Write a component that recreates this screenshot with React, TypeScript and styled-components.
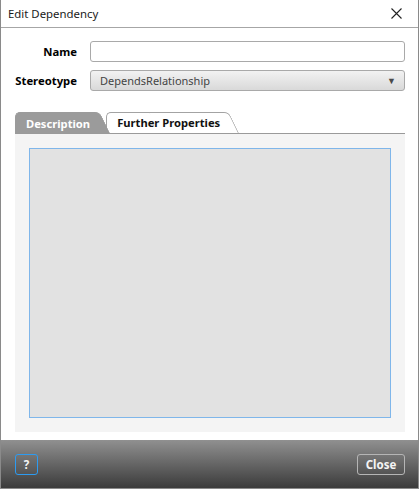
import React from "react";
import styled, { createGlobalStyle } from "styled-components";

const GlobalStyle = createGlobalStyle`
  html, body {
    margin: 0;
    padding: 0;
    background: #ffffff;
  }
  body {
    font-family: "Noto Sans", "Open Sans", sans-serif;
    font-size: 11px;
    color: #000;
  }
`;

const Window = styled.div`
  box-sizing: border-box;
  width: 419px;
  height: 489px;
  display: flex;
  flex-direction: column;
  background: #ffffff;
  border: 1px solid #8a8a8a;
  border-top: none;
`;

const TitleBar = styled.div`
  height: 28px;
  box-sizing: border-box;
  display: flex;
  align-items: center;
  justify-content: space-between;
  padding: 0 16px 0 7px;
  border-bottom: 1px solid #a6a6a6;
`;

const Title = styled.span`
  font-size: 11.4px;
  color: #1a1a1a;
`;

const CloseIcon = styled.button`
  border: none;
  background: none;
  padding: 0;
  width: 11px;
  height: 11px;
  display: flex;
  cursor: pointer;
`;

const Body = styled.div`
  flex: 1;
  display: flex;
  flex-direction: column;
  padding: 13px 13px 8px 14px;
`;

const Form = styled.div`
  display: grid;
  grid-template-columns: 62px 1fr;
  column-gap: 13px;
  row-gap: 8px;
  align-items: center;
`;

const Label = styled.label`
  text-align: right;
  font-weight: bold;
  font-size: 11.3px;
`;

const TextInput = styled.input`
  box-sizing: border-box;
  height: 21px;
  width: 100%;
  border: 1px solid #a9a9a9;
  border-radius: 3px;
  background: #fff;
  outline: none;
`;

const Select = styled.div`
  box-sizing: border-box;
  height: 21px;
  display: flex;
  align-items: center;
  justify-content: space-between;
  padding: 0 8px 0 9px;
  border: 1px solid #a9a9a9;
  border-radius: 3px;
  background: linear-gradient(#f2f2f2, #d9d9d9);
  color: #444;
  font-size: 11px;
`;

const Arrow = styled.span`
  font-size: 9px;
  color: #4a4a4a;
`;

const TabStrip = styled.div`
  margin-top: 21px;
  display: flex;
  border-bottom: 1px solid #9a9a9a;
  height: 21px;
`;

const Tab = styled.div<{ $active?: boolean; $z: number }>`
  position: relative;
  z-index: ${(p) => p.$z};
  display: flex;
  align-items: center;
  font-weight: bold;
  font-size: 11.2px;
  color: ${(p) => (p.$active ? "#ffffff" : "#111")};
  padding: ${(p) => (p.$active ? "1px 20px 0 11px" : "0 19px 0 11px")};
  margin-left: ${(p) => (p.$active ? "0" : "-4px")};

  &::before,
  &::after {
    content: "";
    position: absolute;
    top: 0;
    bottom: 0;
    z-index: -1;
    background: ${(p) => (p.$active ? "#9b9b9b" : "#ffffff")};
    border: 1px solid ${(p) => (p.$active ? "#9b9b9b" : "#a3a3a3")};
    border-bottom: none;
  }
  &::before {
    left: 0;
    right: 50%;
    border-right: none;
    border-radius: 5px 0 0 0;
  }
  &::after {
    left: 40%;
    right: 0;
    border-left: none;
    border-radius: 0 5px 0 0;
    transform: skewX(26deg);
    transform-origin: bottom;
  }
`;

const Panel = styled.div`
  flex: 1;
  display: flex;
  background: #f4f4f4;
  padding: 14px 14px 14px 14px;
`;

const Editor = styled.textarea`
  flex: 1;
  box-sizing: border-box;
  resize: none;
  background: #e2e2e2;
  border: 1px solid #7fb6ea;
  outline: none;
`;

const Footer = styled.div`
  height: 48px;
  box-sizing: border-box;
  display: flex;
  align-items: center;
  justify-content: space-between;
  padding: 1px 13px 0 14px;
  background: linear-gradient(#909090, #3b3b3b);
`;

const FooterButton = styled.button<{ $focused?: boolean }>`
  box-sizing: border-box;
  height: 21px;
  min-width: ${(p) => (p.$focused ? "23px" : "48px")};
  padding: 0 6px;
  border-radius: 3px;
  border: 1px solid ${(p) => (p.$focused ? "#2d9bf0" : "#b5b5b5")};
  background: transparent;
  color: #f4f4f4;
  font-family: "Noto Sans", "Open Sans", sans-serif;
  font-weight: bold;
  font-size: 11.5px;
  cursor: pointer;
`;

export default function App() {
  return (
    <>
      <GlobalStyle />
      <Window>
        <TitleBar>
          <Title>Edit Dependency</Title>
          <CloseIcon aria-label="Close">
            <svg width="11" height="11" viewBox="0 0 11 11">
              <path d="M0.5 0.5 L10.5 10.5 M10.5 0.5 L0.5 10.5" stroke="#222" strokeWidth="1.1" />
            </svg>
          </CloseIcon>
        </TitleBar>
        <Body>
          <Form>
            <Label>Name</Label>
            <TextInput />
            <Label>Stereotype</Label>
            <Select>
              <span>DependsRelationship</span>
              <Arrow>▼</Arrow>
            </Select>
          </Form>
          <TabStrip>
            <Tab $active $z={2}>Description</Tab>
            <Tab $z={1}>Further Properties</Tab>
          </TabStrip>
          <Panel>
            <Editor />
          </Panel>
        </Body>
        <Footer>
          <FooterButton $focused>?</FooterButton>
          <FooterButton>Close</FooterButton>
        </Footer>
      </Window>
    </>
  );
}
